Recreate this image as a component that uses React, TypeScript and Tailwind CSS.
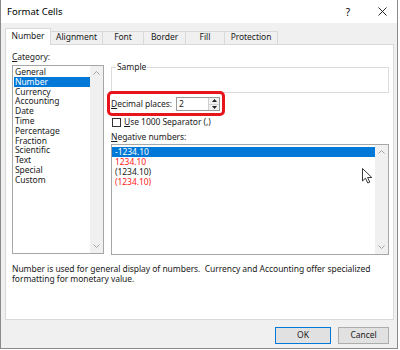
import React from "react";

function ChevUp() {
  return (
    <svg width="7" height="4" viewBox="0 0 7 4" className="block">
      <polyline points="0.5,3.5 3.5,0.5 6.5,3.5" fill="none" stroke="#a3a3a3" strokeWidth="1" />
    </svg>
  );
}
function ChevDown() {
  return (
    <svg width="7" height="4" viewBox="0 0 7 4" className="block">
      <polyline points="0.5,0.5 3.5,3.5 6.5,0.5" fill="none" stroke="#a3a3a3" strokeWidth="1" />
    </svg>
  );
}

function Scrollbar() {
  return (
    <div className="w-[13px] h-full bg-[#f0f0f0] flex flex-col items-center justify-between py-[5px]">
      <ChevUp />
      <ChevDown />
    </div>
  );
}

const categories = [
  "General",
  "Number",
  "Currency",
  "Accounting",
  "Date",
  "Time",
  "Percentage",
  "Fraction",
  "Scientific",
  "Text",
  "Special",
  "Custom",
];

export default function App() {
  return (
    <div className="w-[398px] h-[349px] bg-[#f0f0f0] border-l border-r border-b border-[#8a8a8a] font-['Noto_Sans',sans-serif] text-[8.5px] tracking-[-0.05px] text-[#1a1a1a] flex flex-col">
      {/* Title bar */}
      <div className="h-[23px] bg-white flex items-center pl-[6px] shrink-0">
        <span className="text-[9.5px] leading-none tracking-normal text-black">Format Cells</span>
        <div className="ml-auto flex items-center">
          <span className="text-[10px] leading-none text-black mr-[28px]">?</span>
          <svg width="9" height="9" viewBox="0 0 9 9" className="mr-[10px]">
            <line x1="0.5" y1="0.5" x2="8.5" y2="8.5" stroke="#111" strokeWidth="0.9" />
            <line x1="8.5" y1="0.5" x2="0.5" y2="8.5" stroke="#111" strokeWidth="0.9" />
          </svg>
        </div>
      </div>

      {/* Tabs */}
      <div className="h-[22px] flex items-end pl-[4px] -mb-px relative z-10 shrink-0">
        <div className="h-[17px] w-[46px] bg-white border-t border-l border-r border-[#d9d9d9] flex items-center justify-center pb-[2px]">
          Number
        </div>
        <div className="h-[14px] w-[52px] border border-[#d9d9d9] border-l-0 flex items-center justify-center pb-[1px]">
          Alignment
        </div>
        <div className="h-[14px] w-[41px] border border-[#d9d9d9] border-l-0 flex items-center justify-center pb-[1px]">
          Font
        </div>
        <div className="h-[14px] w-[42px] border border-[#d9d9d9] border-l-0 flex items-center justify-center pb-[1px]">
          Border
        </div>
        <div className="h-[14px] w-[39px] border border-[#d9d9d9] border-l-0 flex items-center justify-center pb-[1px]">
          Fill
        </div>
        <div className="h-[14px] w-[53px] border border-[#d9d9d9] border-l-0 flex items-center justify-center pb-[1px]">
          Protection
        </div>
      </div>

      {/* Panel */}
      <div className="ml-[4px] w-[389px] h-[276px] bg-white border border-[#d9d9d9] shrink-0 pl-[6px]">
        <div className="flex">
          {/* Left column */}
          <div className="w-[92px] pt-[6px]">
            <div className="h-[12px] leading-[12px]">
              <span className="underline underline-offset-1">C</span>ategory:
            </div>
            <div className="mt-[2px] h-[189px] border border-[#a6a6a6] flex">
              <div className="flex-1 pt-[1px] pl-[1px]">
                {categories.map((c) => (
                  <div
                    key={c}
                    className={
                      "h-[9.8px] leading-[9.8px] pl-[1px] " +
                      (c === "Number" ? "bg-[#0078d7] text-white" : "")
                    }
                  >
                    {c}
                  </div>
                ))}
              </div>
              <Scrollbar />
            </div>
          </div>

          {/* Right column */}
          <div className="ml-[7px] w-[278px] pt-[22px]">
            <div className="relative h-[26px] border border-[#dcdcdc]">
              <span className="absolute left-[4px] -top-[7px] bg-white px-[1px] leading-[12px]">Sample</span>
            </div>

            <div className="relative mt-[4px] h-[14px] flex items-center">
              <span className="w-[65px] whitespace-nowrap">
                <span className="underline underline-offset-1">D</span>ecimal places:
              </span>
              <div className="w-[44px] h-[14px] border border-[#9a9a9a] flex">
                <span className="flex-1 pl-[2px] leading-[12px]">2</span>
                <div className="w-[11px] flex flex-col border-l border-[#d0d0d0]">
                  <div className="flex-1 flex items-center justify-center border-b border-[#d0d0d0] bg-[#f0f0f0]">
                    <svg width="5" height="3" viewBox="0 0 5 3">
                      <polygon points="0,3 2.5,0 5,3" fill="#222" />
                    </svg>
                  </div>
                  <div className="flex-1 flex items-center justify-center bg-[#f0f0f0]">
                    <svg width="5" height="3" viewBox="0 0 5 3">
                      <polygon points="0,0 5,0 2.5,3" fill="#222" />
                    </svg>
                  </div>
                </div>
              </div>
              <div className="absolute -left-[4px] -top-[6px] w-[118px] h-[25px] border-[3px] border-[#e8141c] rounded-[5px]" />
            </div>

            <div className="mt-[6px] h-[10px] flex items-center">
              <div className="w-[9px] h-[9px] border border-[#333] bg-white ml-[1px]" />
              <span className="ml-[3px] leading-[10px] whitespace-nowrap">
                <span className="underline underline-offset-1">U</span>se 1000 Separator (,)
              </span>
            </div>

            <div className="mt-[4px] h-[12px] leading-[12px]">
              <span className="underline underline-offset-1">N</span>egative numbers:
            </div>

            <div className="relative mt-[1px] h-[111px] border border-[#a6a6a6] flex">
              <div className="flex-1 pt-[2px]">
                <div className="h-[10px] leading-[10px] pl-[3px] bg-[#0078d7] text-white">-1234.10</div>
                <div className="h-[10px] leading-[10px] pl-[3px] text-[#ff1a1a]">1234.10</div>
                <div className="h-[10px] leading-[10px] pl-[3px]">(1234.10)</div>
                <div className="h-[10px] leading-[10px] pl-[3px] text-[#ff1a1a]">(1234.10)</div>
              </div>
              <Scrollbar />
              <svg
                width="11"
                height="16"
                viewBox="0 0 11 16"
                className="absolute left-[250px] top-[23px]"
              >
                <path
                  d="M0.5 0.5 L0.5 13 L3.5 10.2 L5.8 15 L7.8 14.1 L5.6 9.5 L9.8 9.5 Z"
                  fill="white"
                  stroke="#222"
                  strokeWidth="0.9"
                  strokeLinejoin="round"
                />
              </svg>
            </div>
          </div>
        </div>

        <div className="mt-[9px] leading-[10px] w-[372px]">
          Number is used for general display of numbers.&nbsp; Currency and Accounting offer specialized formatting for monetary value.
        </div>
      </div>

      {/* Footer */}
      <div className="flex justify-end pt-[7px] pr-[8px] gap-[7px]">
        <div className="w-[56px] h-[17px] bg-[#e1e1e1] border border-[#0078d7] flex items-center justify-center">OK</div>
        <div className="w-[51px] h-[17px] bg-[#e1e1e1] border border-[#adadad] flex items-center justify-center">Cancel</div>
      </div>
    </div>
  );
}
